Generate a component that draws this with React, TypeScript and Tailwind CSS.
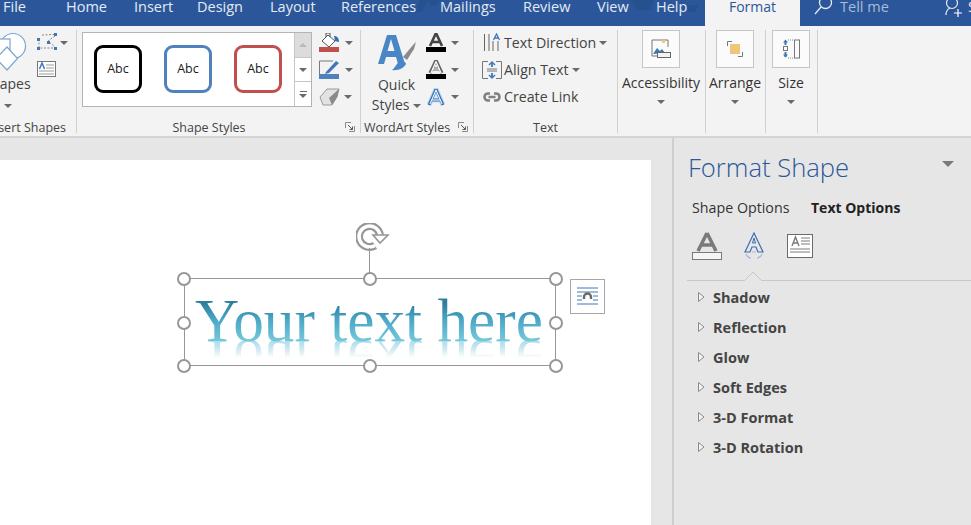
const ui = "font-['Open_Sans',sans-serif]";

function Caret({ className = "" }: { className?: string }) {
  return (
    <svg width="8" height="4" viewBox="0 0 8 4" className={className}>
      <path d="M0 0h8L4 4z" fill="#6a6a6a" />
    </svg>
  );
}

function Launcher() {
  return (
    <svg width="10" height="10" viewBox="0 0 10 10" className="absolute right-[5px] bottom-[1px]">
      <path d="M0.5 6V0.5H6M9.5 4v5.500H4" fill="none" stroke="#8a8a8a" />
      <path d="M3 3l4.500 4.500M7.500 4.500v3h-3" fill="none" stroke="#5a5a5a" />
    </svg>
  );
}

function Group({ width, label, launcher, labelPad = "", children }: { width: string; label?: string; launcher?: boolean; labelPad?: string; children: React.ReactNode }) {
  return (
    <div className={`relative h-full shrink-0 flex flex-col border-r border-[#d0d0d0] ${width}`}>
      <div className="flex-1 min-h-0 flex">{children}</div>
      <div className={`h-[18px] pt-[8px] flex items-center justify-center text-[12.5px] text-[#444] whitespace-nowrap ${labelPad}`}>{label}</div>
      {launcher && <Launcher />}
    </div>
  );
}

function AbcBox({ color }: { color: string }) {
  return (
    <div className={`w-[48px] h-[48px] rounded-[9px] border-[3px] bg-white flex items-center justify-center text-[12.500px] text-[#1a1a1a] ${color}`}>
      Abc
    </div>
  );
}

function LargeButton({ label, children }: { label: string; children: React.ReactNode }) {
  return (
    <div className="w-full pr-[1px] flex flex-col items-center">
      <div className="w-[38px] h-[38px] border border-[#c6c6c6] bg-[#fbfbfb] flex items-center justify-center">{children}</div>
      <div className="mt-[5px] text-[14px] leading-[20px] text-[#333]">{label}</div>
      <Caret className="mt-[7px]" />
    </div>
  );
}

function IconRow({ icon, label, caret }: { icon: React.ReactNode; label: string; caret?: boolean }) {
  return (
    <div className="h-[27px] flex items-center text-[14.2px] text-[#444]">
      <div className="w-[23px] pr-[1px] flex justify-center">{icon}</div>
      <span>{label}</span>
      {caret && <Caret className="ml-[3px]" />}
    </div>
  );
}

const tabs = [
  { label: "File", w: "w-[63px]" },
  { label: "Home", w: "w-[68px]" },
  { label: "Insert", w: "w-[63px]" },
  { label: "Design", w: "w-[73px]" },
  { label: "Layout", w: "w-[71px]" },
  { label: "References", w: "w-[99px]" },
  { label: "Mailings", w: "w-[83px]" },
  { label: "Review", w: "w-[74px]" },
  { label: "View", w: "w-[59px]" },
  { label: "Help", w: "w-[49px]" },
];

const panelRows = ["Shadow", "Reflection", "Glow", "Soft Edges", "3-D Format", "3-D Rotation"];

function Handle({ className }: { className: string }) {
  return <div className={`absolute w-[14px] h-[14px] rounded-full bg-white border-[2.5px] border-[#979797] ${className}`} />;
}

export default function App() {
  return (
    <div className={`w-[971px] h-[525px] overflow-hidden flex flex-col bg-[#e6e6e6] ${ui}`}>
      {/* tab strip */}
      <div className="relative h-[26px] shrink-0 bg-[#2b579a] flex pl-[3px] text-[14.500px] text-[#e4eaf4]">
        {/* faint title bar pattern */}
        <svg width="971" height="26" viewBox="0 0 971 26" className="absolute left-0 top-0" fill="#27508f">
          <path d="M420 0h8l-6 12h-6zM428 0h12l-4 6h-6zM630 0h24l-4 10h-12zM685 5h14l-4 7h-6zM863 12l14-8h6l-14 8zM945 14l8-8h5l-8 8z" />
        </svg>
        {tabs.map((t) => (
          <div key={t.label} className={`relative ${t.w} shrink-0 leading-[14px]`}>{t.label}</div>
        ))}
        <div className="relative w-[95px] shrink-0 bg-[#f3f3f3] text-[14px] text-[#2b579a] text-center leading-[14px]">Format</div>
        <div className="relative ml-[14px] w-[131px] shrink-0 flex items-start text-[#a9bcd9]">
          <svg width="20" height="16" viewBox="0 0 20 16" fill="none" stroke="#e4eaf4" strokeWidth="1.300">
            <circle cx="11.500" cy="2.500" r="6" />
            <path d="M7 7l-6 7" />
          </svg>
          <span className="ml-[6px] leading-[14px]">Tell me</span>
        </div>
        <svg width="20" height="18" viewBox="0 0 20 18" fill="none" stroke="#e4eaf4" strokeWidth="1.200" className="relative shrink-0">
          <circle cx="7" cy="3" r="5.500" />
          <path d="M1 15c0-4 2-6 4-7" />
          <path d="M13 9v8M9 13h8" stroke="#fff" />
        </svg>
        <span className="relative ml-[3px] leading-[14px]">S</span>
      </div>

      {/* ribbon */}
      <div className="h-[112px] shrink-0 bg-[#f3f3f3] border-b-2 border-[#d4d4d4] pt-[4px] pb-[3px] flex text-[#444]">
        <Group width="w-[77px]">
          <div className="relative w-full">
            <svg width="30" height="42" viewBox="0 0 30 42" className="absolute left-0 top-[2px]" fill="#fff" stroke="#7ba5d2" strokeWidth="1.200">
              <circle cx="13" cy="14" r="12.500" />
              <rect x="-8" y="7" width="18" height="18" />
              <path d="M7 15l10.500 11.500L7 38-4 26.500z" />
            </svg>
            <svg width="24" height="18" viewBox="0 0 24 18" className="absolute left-[37px] top-[3px]" fill="none">
              <path d="M2 6v9h16M5 2L18 1.500M18 3l-7 5 7 6" stroke="#8a8a8a" strokeDasharray="2 1.500" />
              <g fill="#3f78b8">
                <rect x="0" y="5" width="3" height="3" />
                <rect x="17" y="0" width="3" height="3" />
                <rect x="10" y="8" width="3" height="3" />
                <rect x="0" y="14" width="3" height="3" />
                <rect x="17" y="14" width="3" height="3" />
              </g>
            </svg>
            <Caret className="absolute left-[60px] top-[11px]" />
            <svg width="19" height="16" viewBox="0 0 19 16" className="absolute left-[37px] top-[31px]" fill="#fff" stroke="#777">
              <rect x="0.500" y="0.500" width="18" height="15" />
              <path d="M9 4h8M9 7h8M2 10h15M2 13h15" stroke="#9a9a9a" />
              <path d="M2.500 8L5 2l2.500 6" fill="none" stroke="#3f78b8" strokeWidth="1.500" />
            </svg>
            <div className="absolute left-[-18px] top-[44px] w-[50px] text-[14px] leading-[20px] text-center text-[#444]">Shapes</div>
            <Caret className="absolute left-[4px] top-[74px]" />
            <div className="absolute left-[-13px] top-[89px] text-[12.500px] leading-[18px] whitespace-nowrap">Insert Shapes</div>
          </div>
        </Group>

        <Group width="w-[284px]" label="Shape Styles" labelPad="pr-[19px]" launcher>
          <div className="ml-[5px] mt-[2px] w-[230px] h-[75px] border border-[#b4b4b4] bg-white flex">
            <div className="flex-1 flex items-start pt-[12px] pl-[11px] gap-[22px]">
              <AbcBox color="border-black" />
              <AbcBox color="border-[#4f81bd]" />
              <AbcBox color="border-[#c0504d]" />
            </div>
            <div className="w-[17px] flex flex-col border-l border-[#c6c6c6]">
              <div className="h-[25px] bg-[#dcdcdc] flex items-center justify-center border-b border-[#c6c6c6]">
                <Caret className="rotate-180 opacity-30" />
              </div>
              <div className="h-[24px] flex items-center justify-center border-b border-[#c6c6c6]">
                <Caret />
              </div>
              <div className="flex-1 flex flex-col items-center justify-center gap-[2px]">
                <div className="w-[7px] h-px bg-[#6a6a6a]" />
                <Caret />
              </div>
            </div>
          </div>
          <div className="ml-[7px] mt-[-1px] flex flex-col">
            <div className="h-[27px] flex items-center">
              <svg width="21" height="20" viewBox="0 0 21 20" fill="none">
                <path d="M3 8l6-6 7 6-6 6z" fill="#fff" stroke="#555" />
                <path d="M7 4V0h4v4" stroke="#555" />
                <path d="M15 3c3 0 5 2 5 6l-4-1z" fill="#2f6fb5" />
                <rect x="0" y="14" width="20" height="5" fill="#c0504d" />
              </svg>
              <Caret className="ml-[5px]" />
            </div>
            <div className="h-[27px] flex items-center">
              <svg width="21" height="20" viewBox="0 0 21 20" fill="none">
                <path d="M14 1H.5v13" stroke="#777" />
                <path d="M7 12L17 1l3 2-10 10-4 1z" fill="#3f78b8" />
                <rect x="0" y="14" width="20" height="5" fill="#4f81bd" />
              </svg>
              <Caret className="ml-[5px]" />
            </div>
            <div className="h-[27px] flex items-center">
              <svg width="21" height="18" viewBox="0 0 21 18">
                <path d="M1 9L8 1h12l-2 8-5 8H4z" fill="#e2e2e2" stroke="#9a9a9a" />
                <path d="M20 1l-2 8-5 8-3-7z" fill="#8a8a8a" />
              </svg>
              <Caret className="ml-[4px]" />
            </div>
          </div>
        </Group>

        <Group width="w-[113px]" label="WordArt Styles" labelPad="pr-[20px]" launcher>
          <div className="w-[71px] flex flex-col items-center">
            <svg width="42" height="38" viewBox="0 0 42 38" className="mt-[3px]">
              <path d="M11 2h9l9 29h-7l-2-7H10l-2 7H2zM11.500 18h7L15 6z" fill="#4a86c5" />
              <path d="M27 24l10-12 3-3-2 7-7 11z" fill="#8a8a8a" />
              <path d="M16 37c3-1 4-8 10-9 2 0 4 2 4 3-2 4-8 7-14 6z" fill="#4a86c5" />
            </svg>
            <div className="mt-[4px] text-center text-[14px] leading-[20px] text-[#444]">
              Quick
              <br />
              <span className="whitespace-nowrap">Styles <Caret className="inline align-middle" /></span>
            </div>
          </div>
          <div className="flex flex-col mt-[-1px] -ml-[6px]">
            <div className="h-[27px] flex items-center">
              <svg width="20" height="20" viewBox="0 0 20 20">
                <path d="M10 0L4 13M10 0l6 13M6 9h8" fill="none" stroke="#444" strokeWidth="2.600" />
                <rect y="14" width="20" height="5" fill="#000" />
              </svg>
              <Caret className="ml-[5px]" />
            </div>
            <div className="h-[27px] flex items-center">
              <svg width="20" height="20" viewBox="0 0 20 20">
                <path d="M10 0L4 13M10 0l6 13M6 9h8" fill="none" stroke="#666" strokeWidth="3" />
                <path d="M10 1.500L5 13M10 1.500L15 13M6 9h8" fill="none" stroke="#fff" strokeWidth="1.200" />
                <rect y="14" width="20" height="5" fill="#000" />
              </svg>
              <Caret className="ml-[5px]" />
            </div>
            <div className="h-[27px] flex items-center">
              <svg width="20" height="20" viewBox="0 0 20 20">
                <path d="M10 2L3 18M10 2l7 16M6 13h8" fill="none" stroke="#c4dcf4" strokeWidth="5" />
                <path d="M10 2L3 18M10 2l7 16M6 13h8" fill="none" stroke="#3f78b8" strokeWidth="3" />
                <path d="M10 3L4 17M10 3l6 14M6 13h8" fill="none" stroke="#fff" strokeWidth="1" />
              </svg>
              <Caret className="ml-[5px]" />
            </div>
          </div>
        </Group>

        <Group width="w-[144px]" label="Text">
          <div className="ml-[7px] mt-[-1px] flex flex-col">
            <IconRow
              caret
              label="Text Direction"
              icon={
                <svg width="18" height="20" viewBox="0 0 18 20" fill="none" stroke="#666">
                  <path d="M1.500 1v17M6 1v17M10 8v10M15 8v10" />
                  <path d="M10.500 7l3-6 3 6M11.500 5h4" stroke="#3f78b8" strokeWidth="1.300" />
                </svg>
              }
            />
            <IconRow
              caret
              label="Align Text"
              icon={
                <svg width="20" height="18" viewBox="0 0 20 18" fill="none" stroke="#777">
                  <path d="M6 .5H.5v17H6M14 .5h5.500v17H14M5 8h10M5 10h10" />
                  <path d="M10 1v5M10 12v5" stroke="#3f78b8" strokeWidth="1.800" />
                  <path d="M7 4l3-3 3 3M7 14l3 3 3-3" stroke="#3f78b8" strokeWidth="1.400" />
                </svg>
              }
            />
            <IconRow
              label="Create Link"
              icon={
                <svg width="18" height="10" viewBox="0 0 18 10" fill="none" stroke="#808080" strokeWidth="2.600">
                  <path d="M7 1.500H5a3.500 3.500 0 0 0 0 7h2M11 1.500h2a3.500 3.500 0 0 1 0 7h-2M5.500 5h7" />
                </svg>
              }
            />
          </div>
        </Group>

        <Group width="w-[88px]">
          <LargeButton label="Accessibility">
            <svg width="20" height="20" viewBox="0 0 20 20" fill="none">
              <path d="M17 8V1H1v16h8" stroke="#777" />
              <rect x="11" y="1" width="3" height="3" fill="#efc77a" />
              <path d="M2 15l4-6 3 3 2-2 3 4z" fill="#3f78b8" />
              <rect x="6.500" y="13.500" width="13" height="5" fill="#f3f3f3" stroke="#666" />
            </svg>
          </LargeButton>
        </Group>
        <Group width="w-[60px]">
          <LargeButton label="Arrange">
            <svg width="16" height="16" viewBox="0 0 16 16" fill="none" stroke="#777">
              <path d="M.5 5V.5H5M15.500 11v4.500H11" />
              <rect x="3" y="3" width="10" height="10" fill="#efc77a" stroke="none" />
            </svg>
          </LargeButton>
        </Group>
        <Group width="w-[52px]">
          <LargeButton label="Size">
            <svg width="18" height="20" viewBox="0 0 18 20" fill="none">
              <rect x="12.500" y="1" width="5" height="18" stroke="#777" />
              <path d="M6 1h6M6 19h6" stroke="#888" strokeDasharray="1 1" />
              <rect x="1.500" y="7.500" width="4" height="4" stroke="#777" />
              <path d="M3.500 6V2M3.500 13v5" stroke="#3f78b8" strokeWidth="2" />
              <path d="M1 3.500l2.500-3 2.500 3zM1 15.500l2.500 3 2.500-3z" fill="#3f78b8" />
            </svg>
          </LargeButton>
        </Group>
      </div>

      {/* document + pane */}
      <div className="flex-1 min-h-0 flex">
        <div className="w-[672px] shrink-0 pt-[22px] pr-[21px]">
          <div className="relative h-full bg-white">
            {/* selected WordArt shape */}
            <svg width="34" height="30" viewBox="0 0 34 30" className="absolute left-[356px] top-[63px]" fill="none">
              <path d="M19 22.500A10.500 10.500 0 1 1 24 12.500" stroke="#979797" strokeWidth="8" />
              <path d="M19 22.500A10.500 10.500 0 1 1 24 12.500" stroke="#fff" strokeWidth="3.500" />
              <path d="M17 12h15l-8 8z" fill="#fff" stroke="#979797" strokeWidth="1.600" />
            </svg>
            <div className="absolute left-[369px] top-[88px] w-[1px] h-[30px] bg-[#979797]" />
            <div className="absolute left-[184px] top-[118px] w-[372px] h-[88px] border border-[#979797]">
              <div className="absolute left-[10px] top-[8px] text-[61.300px] leading-[66px] whitespace-nowrap font-['Liberation_Serif',serif] text-transparent bg-clip-text bg-gradient-to-b from-[#2f7f9c] from-[25%] via-[#4aa8c6] via-[50%] to-[#74c6da] to-[80%] [-webkit-box-reflect:below_-25px_linear-gradient(transparent_55%,rgba(0,0,0,0.6)_81%)]">
                Your text here
              </div>
            </div>
            <Handle className="left-[177px] top-[112px]" />
            <Handle className="left-[363px] top-[112px]" />
            <Handle className="left-[549px] top-[112px]" />
            <Handle className="left-[177px] top-[156px]" />
            <Handle className="left-[549px] top-[156px]" />
            <Handle className="left-[177px] top-[199px]" />
            <Handle className="left-[363px] top-[199px]" />
            <Handle className="left-[549px] top-[199px]" />
            {/* layout options */}
            <div className="absolute left-[570px] top-[119px] w-[35px] h-[35px] border border-[#a6a6a6] bg-white flex items-center justify-center">
              <svg width="21" height="19" viewBox="0 0 21 19" fill="none">
                <path d="M0 1h21M0 5h21M0 9h5M16 9h5M0 13h5M16 13h5M0 17h21" stroke="#3f78b8" />
                <path d="M7 12V10a3.500 3.500 0 0 1 7 0v2" stroke="#6a6a6a" strokeWidth="2.400" />
              </svg>
            </div>
          </div>
        </div>

        {/* format shape pane */}
        <div className="flex-1 min-w-0 border-l-2 border-[#cfcfcf]">
          <div className="relative pl-[14px]">
            <div className="pt-[12px] text-[25.600px] leading-[36px] font-light text-[#2b579a] whitespace-nowrap">Format Shape</div>
            <svg width="12" height="6" viewBox="0 0 12 6" className="absolute right-[17px] top-[23px]">
              <path d="M0 0h12L6 6z" fill="#7a7a7a" />
            </svg>
            <div className="mt-[12px] pl-[4px] flex leading-[20px] text-[#333]">
              <div className="w-[119px] text-[14.250px]">Shape Options</div>
              <div className="font-bold text-[14px] text-[#222]">Text Options</div>
            </div>
            <div className="mt-[14px] pl-[4px] flex items-start h-[48px]">
              <svg width="30" height="28" viewBox="0 0 30 28" fill="none">
                <path d="M15 1L6 19M15 1l9 18M9 13h12" stroke="#7a7a7a" strokeWidth="3.500" />
                <rect x="0.500" y="20.500" width="29" height="7" fill="#f4f4f4" stroke="#7a7a7a" />
              </svg>
              <svg width="22" height="28" viewBox="0 0 22 28" fill="none" className="ml-[21px]">
                <path d="M11 1L2 20h5l2-5h4l2 5h5z" stroke="#3f6fae" strokeWidth="1.200" />
                <path d="M9.500 11L11 6l1.500 5z" stroke="#3f6fae" />
                <path d="M3 22c1 3 4 4 5 4M19 22c-1 3-4 4-5 4M9 20h4" stroke="#9db9da" strokeWidth="1.200" />
              </svg>
              <svg width="26" height="24" viewBox="0 0 26 24" fill="none" className="ml-[22px] mt-[2px]">
                <rect x="0.500" y="0.500" width="25" height="23" fill="#fff" stroke="#6a6a6a" />
                <path d="M5 12l3.500-9 3.500 9M6 9h5" stroke="#7a7a7a" strokeWidth="1.400" />
                <path d="M14 4h9M14 7h9M14 10h9M3 15h20M3 18h20" stroke="#7a7a7a" />
              </svg>
            </div>
          </div>
          <div className="relative ml-[13px] h-[1px] bg-[#c8c8c8]">
            <svg width="18" height="10" viewBox="0 0 18 10" className="absolute left-[57px] top-[-9px]">
              <path d="M0 10L9 1l9 9" fill="#e6e6e6" stroke="#c8c8c8" />
            </svg>
          </div>
          <div className="pt-[2px] pl-[24px]">
            {panelRows.map((r) => (
              <div key={r} className="h-[30px] flex items-center text-[14.500px] font-bold text-[#444]">
                <svg width="7" height="10" viewBox="0 0 7 10" className="shrink-0 mb-[2px]">
                  <path d="M.5.5L6 5 .5 9.500z" fill="#f4f4f4" stroke="#8a8a8a" />
                </svg>
                <span className="ml-[8px]">{r}</span>
              </div>
            ))}
          </div>
        </div>
      </div>
    </div>
  );
}
